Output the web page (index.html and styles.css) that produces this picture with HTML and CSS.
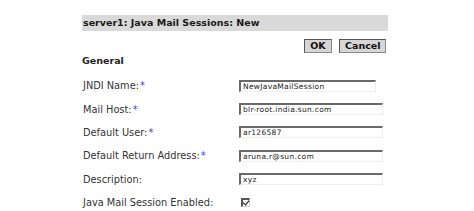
FILE: index.html
```html
<!DOCTYPE html>
<html lang="en">
<head>
  <meta charset="UTF-8">
  <title>Java Mail Sessions: New</title>
  <link rel="stylesheet" href="styles.css">
</head>
<body>
  <div class="page">
    <div class="titleBar">server1: Java Mail Sessions: New</div>

    <div class="buttonRow">
      <button class="btn okBtn">OK</button>
      <button class="btn cancelBtn">Cancel</button>
    </div>

    <div class="sectionTitle">General</div>

    <div class="form">
      <div class="label">JNDI Name:<span class="req">*</span></div>
      <div class="field"><input class="textInput short" type="text" value="NewJavaMailSession"></div>

      <div class="label">Mail Host:<span class="req">*</span></div>
      <div class="field"><input class="textInput" type="text" value="blr-root.india.sun.com"></div>

      <div class="label">Default User:<span class="req">*</span></div>
      <div class="field"><input class="textInput" type="text" value="ar126587"></div>

      <div class="label">Default Return Address:<span class="req">*</span></div>
      <div class="field"><input class="textInput" type="text" value="aruna.r@sun.com"></div>

      <div class="label">Description:</div>
      <div class="field"><input class="textInput" type="text" value="xyz"></div>

      <div class="label">Java Mail Session Enabled:</div>
      <div class="field"><span class="checkBox"></span></div>
    </div>
  </div>
</body>
</html>
```

FILE: styles.css
```css
* {
  margin: 0;
  padding: 0;
  box-sizing: border-box;
}

body {
  font-family: "DejaVu Sans", Verdana, sans-serif;
  background-color: #fff;
  color: #222;
}

.page {
  margin-left: 82px;
  width: 306px;
  padding-top: 15px;
}

.titleBar {
  height: 16px;
  line-height: 16px;
  background-color: #d9d9d9;
  font-size: 9.5px;
  font-weight: bold;
  color: #1a1a1a;
  padding-left: 1px;
}

.buttonRow {
  display: flex;
  justify-content: flex-end;
  gap: 7px;
  margin-top: 8px;
  padding-right: 2px;
}

.btn {
  height: 14px;
  padding: 0 5px;
  font-family: "DejaVu Sans", Verdana, sans-serif;
  font-size: 9.5px;
  font-weight: bold;
  color: #111;
  background-color: #d6d6d6;
  border: 1px solid #555;
  border-right-color: #888;
  border-bottom-color: #888;
  line-height: 12px;
}

.okBtn {
  width: 28px;
}

.cancelBtn {
  width: 47px;
}

.sectionTitle {
  font-size: 9.5px;
  font-weight: bold;
  margin-top: 1px;
  line-height: 14px;
}

.form {
  display: grid;
  grid-template-columns: 157px 1fr;
  grid-auto-rows: 23.4px;
  margin-top: 6px;
  align-items: center;
}

.label {
  font-size: 9.8px;
  color: #333;
  padding-left: 1px;
}

.req {
  color: #3344ee;
  margin-left: 1px;
}

.textInput {
  display: block;
  width: 144px;
  height: 12px;
  font-family: "DejaVu Sans", Verdana, sans-serif;
  font-size: 7.5px;
  letter-spacing: 0.3px;
  color: #222;
  padding: 0 2px;
  border: 1px solid #eee;
  border-top: 2px solid #6a6a6a;
  border-left: 2px solid #6a6a6a;
  background-color: #fff;
}

.textInput.short {
  width: 137px;
}

.checkBox {
  display: block;
  width: 9px;
  height: 9px;
  margin-left: 2px;
  margin-top: -1px;
  border-top: 2px solid #555;
  border-left: 2px solid #555;
  border-right: 1px solid #ccc;
  border-bottom: 1px solid #ccc;
  position: relative;
}

.checkBox::after {
  content: '';
  position: absolute;
  left: 1px;
  top: -1px;
  width: 3px;
  height: 5px;
  border-right: 1.5px solid #111;
  border-bottom: 1.5px solid #111;
  transform: rotate(40deg);
}
```
